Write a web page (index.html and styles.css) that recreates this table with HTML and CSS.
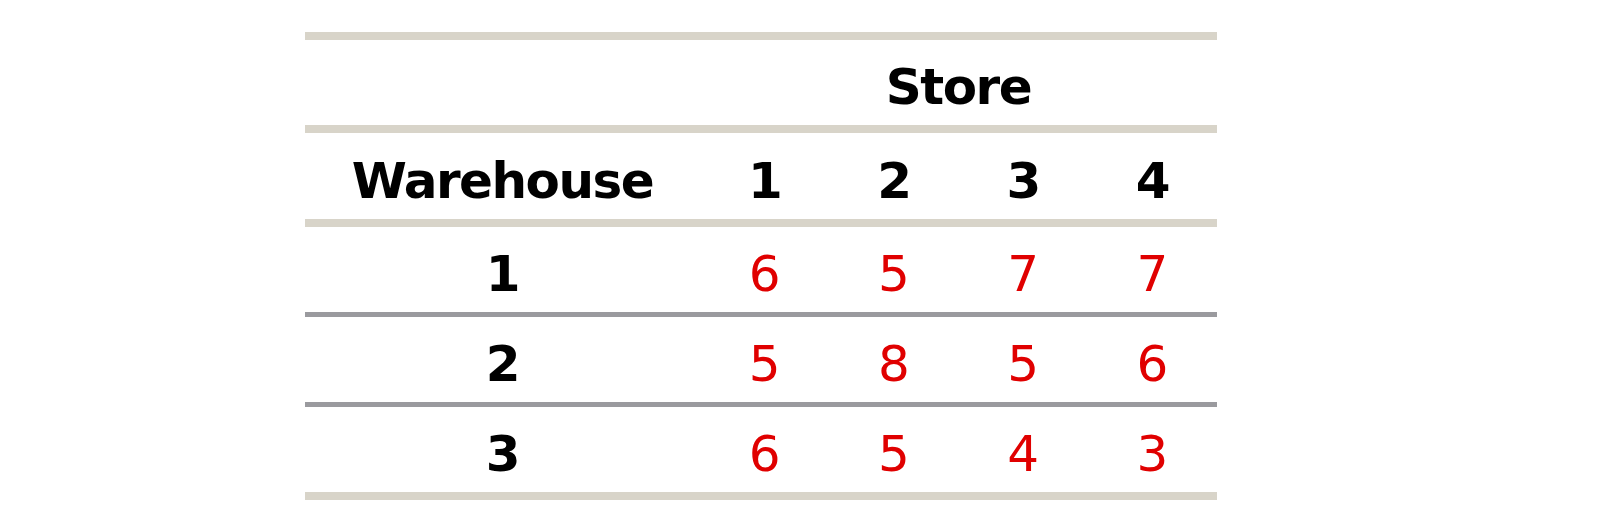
FILE: index.html
```html
<!DOCTYPE html>
<html>
<head>
<meta charset="utf-8">
<link rel="stylesheet" href="styles.css">
</head>
<body>
<div class="page">
<table class="grid">
  <colgroup>
    <col class="col-label">
    <col class="col-num"><col class="col-num"><col class="col-num"><col class="col-num">
  </colgroup>
  <thead>
    <tr class="top">
      <th></th>
      <th colspan="4">Store</th>
    </tr>
    <tr class="head">
      <th>Warehouse</th>
      <th>1</th><th>2</th><th>3</th><th>4</th>
    </tr>
  </thead>
  <tbody>
    <tr class="row">
      <th>1</th>
      <td>6</td><td>5</td><td>7</td><td>7</td>
    </tr>
    <tr class="row">
      <th>2</th>
      <td>5</td><td>8</td><td>5</td><td>6</td>
    </tr>
    <tr class="row last">
      <th>3</th>
      <td>6</td><td>5</td><td>4</td><td>3</td>
    </tr>
  </tbody>
</table>
</div>
</body>
</html>
```
FILE: styles.css
```css
html, body {
  margin: 0;
  padding: 0;
  background: #ffffff;
}
.page {
  padding: 32px 0 0 305px;
}
.grid {
  border-collapse: separate;
  border-spacing: 0;
  width: 912px;
  table-layout: fixed;
  font-family: "DejaVu Sans", Verdana, sans-serif;
  font-size: 50px;
}
.col-label {
  width: 395px;
}
.col-num {
  width: 129.25px;
}
.grid th, .grid td {
  padding: 9px 0 0 0;
  text-align: center;
  vertical-align: middle;
  height: 76px;
  line-height: 1;
  box-sizing: content-box;
}
.grid th {
  font-weight: bold;
  color: #000;
  letter-spacing: -1.5px;
}
.grid td {
  color: #e00000;
  font-weight: normal;
}
.head th {
  height: 77px;
}
.top th {
  border-top: 8px solid #d8d4c9;
  border-bottom: 8px solid #d8d4c9;
}
.head th {
  border-bottom: 8px solid #d8d4c9;
}
.row th, .row td {
  border-bottom: 5px solid #9a9a9e;
}
.row.last th, .row.last td {
  border-bottom: 8px solid #d8d4c9;
}
```
